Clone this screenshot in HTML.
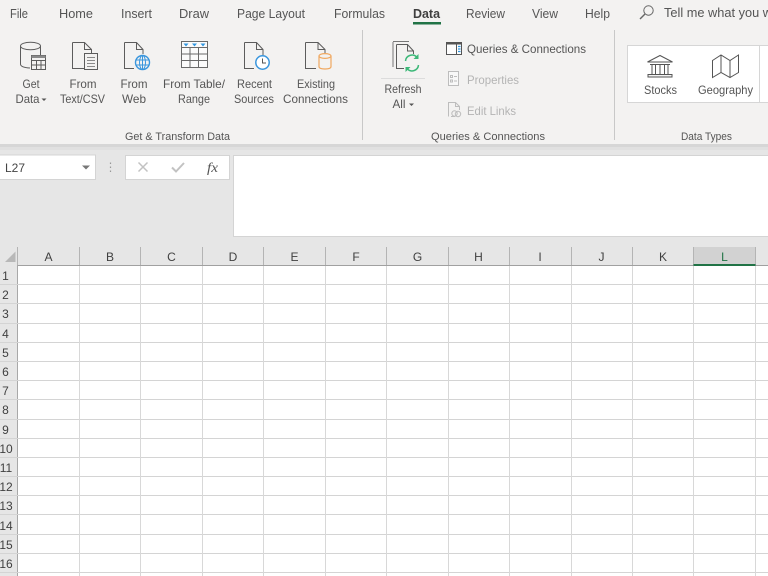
<!DOCTYPE html>
<html lang="en"><head><meta charset="utf-8"><title>Excel Data tab</title>
<style>
html,body{margin:0;padding:0;background:#fff;width:768px;height:576px;overflow:hidden}
svg{display:block;filter:blur(.3px)}
text{font-family:"Liberation Sans",sans-serif;fill:#555;font-size:12px}
.t{font-size:12.5px;fill:#555}
.c{text-anchor:middle}
.g{font-size:11px;fill:#555}
.d{fill:#b4b4b4}
.h{font-size:12px;fill:#404040;text-anchor:middle}
.n{font-size:12px;fill:#404040;text-anchor:middle}
.i{fill:none;stroke:#5c5c5c;stroke-width:1}
</style></head><body>
<svg width="768" height="576" viewBox="0 0 768 576" xmlns="http://www.w3.org/2000/svg">
<!-- backgrounds -->
<rect width="768" height="576" fill="#fff"/>
<rect width="768" height="247" fill="#e6e6e6"/>
<rect y="144" width="768" height="5" fill="#d6d6d6"/>
<rect y="147" width="768" height="3" fill="#e0e0e0"/>
<rect width="768" height="144" fill="#f3f2f1"/>

<!-- tabs -->
<text class="t" x="10" y="18" textLength="18" lengthAdjust="spacingAndGlyphs">File</text>
<text class="t" x="59" y="18" textLength="34" lengthAdjust="spacingAndGlyphs">Home</text>
<text class="t" x="121" y="18" textLength="31" lengthAdjust="spacingAndGlyphs">Insert</text>
<text class="t" x="179" y="18" textLength="30" lengthAdjust="spacingAndGlyphs">Draw</text>
<text class="t" x="237" y="18" textLength="68" lengthAdjust="spacingAndGlyphs">Page Layout</text>
<text class="t" x="334" y="18" textLength="51" lengthAdjust="spacingAndGlyphs">Formulas</text>
<text class="t" x="413" y="18" textLength="27" lengthAdjust="spacingAndGlyphs" style="font-weight:bold;fill:#3f3f3f">Data</text>
<rect x="413" y="22" width="28" height="2.5" fill="#217346"/>
<text class="t" x="466" y="18" textLength="39" lengthAdjust="spacingAndGlyphs">Review</text>
<text class="t" x="532" y="18" textLength="26" lengthAdjust="spacingAndGlyphs">View</text>
<text class="t" x="585" y="18" textLength="25" lengthAdjust="spacingAndGlyphs">Help</text>
<circle cx="648.5" cy="10.5" r="4.7" fill="none" stroke="#666" stroke-width="1"/>
<path d="M645 14L640 19" stroke="#666" stroke-width="1.4" fill="none"/>
<text class="t" x="664" y="17" textLength="108" lengthAdjust="spacingAndGlyphs">Tell me what you w</text>

<!-- Get Data -->
<path class="i" d="M20.5 46V64Q20.5 67.5 30 68M40.5 46V55"/>
<ellipse class="i" cx="30.5" cy="46" rx="10" ry="3.8"/>
<rect x="31" y="55" width="15" height="15" fill="#f3f2f1"/>
<path class="i" d="M31.5 55.5H45.5V69.5H31.5ZM31.5 60.5H45.5M31.5 65H45.5M36.5 60.5V69.5M41 60.5V69.5"/>
<rect x="31.5" y="55.5" width="14" height="2.5" fill="#8a8a8a"/>
<text class="c" x="31" y="88" textLength="17" lengthAdjust="spacingAndGlyphs">Get</text>
<text x="15.5" y="103" textLength="24" lengthAdjust="spacingAndGlyphs">Data</text>
<path d="M41.5 98.5H46.5L44 101Z" fill="#555"/>

<!-- From Text -->
<path class="i" d="M72.5 42.5H84.5L91.5 49.5V53M84.5 42.5V49.5H91.5M84 68.5H72.5V42.5"/>
<rect x="84.5" y="53.5" width="13" height="16" fill="#f3f2f1" stroke="#5c5c5c"/>
<path d="M87 57.5H95M87 60.5H95M87 63.5H95M87 66.5H95" stroke="#8a8a8a" fill="none"/>
<text class="c" x="83" y="88" textLength="27" lengthAdjust="spacingAndGlyphs">From</text>
<text class="c" x="82.5" y="103" textLength="45" lengthAdjust="spacingAndGlyphs">Text/CSV</text>

<!-- From Web -->
<path class="i" d="M124.5 42.5H136.5L143 49.5V54M136.5 42.5V49.5H143M134 68.5H124.5V42.5"/>
<circle cx="142.5" cy="62.5" r="7" fill="#f3f2f1" stroke="#3a96dd" stroke-width="1.4"/>
<ellipse cx="142.5" cy="62.5" rx="3" ry="7" fill="none" stroke="#3a96dd"/>
<path d="M135.5 60H149.5M135.5 65H149.5M142.5 55.5V69.5" stroke="#3a96dd" fill="none"/>
<text class="c" x="134" y="88" textLength="27" lengthAdjust="spacingAndGlyphs">From</text>
<text class="c" x="134" y="103" textLength="24" lengthAdjust="spacingAndGlyphs">Web</text>

<!-- From Table -->
<rect x="181.5" y="41.5" width="26" height="26" fill="#fbfbfb" stroke="#6a6a6a"/>
<path d="M181.5 47.5H207.5M181.5 54H207.5M181.5 60.5H207.5M190 47.5V67.5M198.5 47.5V67.5" stroke="#6a6a6a" fill="none"/>
<path d="M183.5 43.5H188.5L186 46.5ZM192 43.5H197L194.5 46.5ZM200.5 43.5H205.5L203 46.5Z" fill="#2f96e0"/>
<text x="163" y="88" textLength="62" lengthAdjust="spacingAndGlyphs">From Table/</text>
<text class="c" x="194" y="103" textLength="32" lengthAdjust="spacingAndGlyphs">Range</text>

<!-- Recent -->
<path class="i" d="M244.5 42.5H256.5L263 49.5V55M256.5 42.5V49.5H263M254 68.5H244.5V42.5"/>
<circle cx="262.5" cy="62.5" r="6.7" fill="#fff" stroke="#3a96dd" stroke-width="1.5"/>
<path d="M262.5 58.5V63H266" stroke="#555" fill="none"/>
<text class="c" x="254.5" y="88" textLength="35" lengthAdjust="spacingAndGlyphs">Recent</text>
<text class="c" x="254" y="103" textLength="40" lengthAdjust="spacingAndGlyphs">Sources</text>

<!-- Existing -->
<path class="i" d="M305.5 42.5H318L325 49.5V53M318 42.5V49.5H325M316 68.5H305.5V42.5"/>
<path d="M319 56V66.5Q319 69 325 69Q331 69 331 66.5V56" fill="#f3f2f1" stroke="#f0a860" stroke-width="1.2"/>
<ellipse cx="325" cy="56" rx="6" ry="2.4" fill="#f3f2f1" stroke="#f0a860" stroke-width="1.2"/>
<text class="c" x="316" y="88" textLength="38" lengthAdjust="spacingAndGlyphs">Existing</text>
<text x="283" y="103" textLength="65" lengthAdjust="spacingAndGlyphs">Connections</text>

<text class="g" x="125" y="140" textLength="105" lengthAdjust="spacingAndGlyphs">Get &amp; Transform Data</text>
<path d="M362.5 30V140M614.5 30V140" stroke="#c8c8c8" fill="none"/>

<!-- Refresh -->
<path class="i" d="M393 42V67M393 41.5H409" style="stroke:#777"/>
<path class="i" d="M396.5 44.5H407.5L413.5 51V54M407.5 44.5V51H413.5M404 68.5H396.5V44.5"/>
<path d="M405.5 61A6.5 6.5 0 0 1 417 57.5M418.5 65A6.5 6.5 0 0 1 407 68.5" fill="none" stroke="#3cb878" stroke-width="1.5"/>
<path d="M418.5 54V59H413.5ZM405.5 72V67H410.5Z" fill="#3cb878"/>
<path d="M381 78.5H425" stroke="#dcdcdc" fill="none"/>
<text class="c" x="403" y="93" textLength="37" lengthAdjust="spacingAndGlyphs">Refresh</text>
<text x="392.5" y="108" textLength="13" lengthAdjust="spacingAndGlyphs">All</text>
<path d="M409 103.5H414L411.5 106Z" fill="#555"/>

<!-- Queries icon -->
<rect x="446.5" y="42.5" width="15" height="12" fill="#fdfdfd" stroke="#555"/>
<rect x="446.5" y="42.5" width="15" height="2" fill="#555"/>
<path d="M456.5 44V54" stroke="#555" fill="none"/>
<path d="M458 46.5H460.5M458 49H460.5M458 51.5H460.5" stroke="#2f96e0" stroke-width="1.2" fill="none"/>
<text x="467" y="53" textLength="119" lengthAdjust="spacingAndGlyphs">Queries &amp; Connections</text>

<!-- Properties -->
<rect x="448.5" y="71.5" width="10" height="14" fill="#f8f8f8" stroke="#bdbdbd"/>
<path d="M450.5 75.5H452.5V77.5H450.5ZM450.5 80H452.5V82H450.5ZM454 76.5H457M454 81H457" stroke="#bdbdbd" fill="none"/>
<text class="d" x="467" y="84" textLength="52" lengthAdjust="spacingAndGlyphs">Properties</text>

<!-- Edit Links -->
<path d="M448.5 116.5V102.5H455.5L459.5 106.5V110M455.5 102.5V106.5H459.5" stroke="#bdbdbd" fill="none"/>
<path d="M451 116.500H455" stroke="#bdbdbd" fill="none"/>
<circle cx="454.5" cy="113.5" r="2.7" fill="none" stroke="#bdbdbd"/>
<circle cx="458" cy="114" r="2.7" fill="none" stroke="#bdbdbd"/>
<text class="d" x="467" y="115" textLength="49" lengthAdjust="spacingAndGlyphs">Edit Links</text>

<text class="g" x="431" y="140" textLength="114" lengthAdjust="spacingAndGlyphs">Queries &amp; Connections</text>

<!-- Data types -->
<rect x="627.5" y="45.5" width="145" height="57" fill="#fff" stroke="#d6d6d6"/>
<path d="M759.5 45V102" stroke="#d6d6d6" fill="none"/>
<path class="i" d="M647.5 62L660 55.5L672.5 62ZM650 64.5H670M652 65V74M655.5 65V74M660 65V74M664.5 65V74M668 65V74" style="stroke:#555"/>
<rect x="648" y="74.5" width="24" height="2.5" fill="#f3f3f3" stroke="#555"/>
<path class="i" d="M712.5 60.5L721 55L730 60.5L738.5 55V72.5L730 77.5L721 72.5L712.5 77.5ZM721 55V72.5M730 60.5V77.5" style="stroke:#555"/>
<text class="c" x="660.5" y="94" textLength="33" lengthAdjust="spacingAndGlyphs">Stocks</text>
<text x="698" y="94" textLength="55" lengthAdjust="spacingAndGlyphs">Geography</text>
<text class="g" x="681" y="140" textLength="51" lengthAdjust="spacingAndGlyphs">Data Types</text>

<!-- Name box / formula bar -->
<rect x="-1" y="155" width="96.5" height="24.5" fill="#fff" stroke="#d4d4d4"/>
<text x="5" y="172" style="fill:#444" textLength="20" lengthAdjust="spacingAndGlyphs">L27</text>
<path d="M82 165.5H90L86 169.5Z" fill="#777"/>
<path d="M110.5 162.5V164M110.5 166.5V168M110.5 170.5V172" stroke="#999" stroke-width="1.2" fill="none"/>
<rect x="125.5" y="155.5" width="104" height="24" fill="#fff" stroke="#d4d4d4"/>
<path d="M138.5 162.5L147.5 171.5M147.5 162.5L138.5 171.5" stroke="#c2c2c2" stroke-width="1.5" fill="none"/>
<path d="M172 167.5L176 171.5L184 163" stroke="#c2c2c2" stroke-width="2" fill="none"/>
<text x="207" y="172" style="font-family:'Liberation Serif',serif;font-style:italic;font-size:14px;fill:#555" textLength="11" lengthAdjust="spacingAndGlyphs">fx</text>
<rect x="233.5" y="155.5" width="540" height="81" fill="#fff" stroke="#d4d4d4"/>

<!-- grid headers -->
<rect y="247" width="768" height="18" fill="#e6e6e6"/>
<rect x="693.5" y="247" width="61.5" height="18" fill="#d2d2d2"/>
<path d="M5 262H15.5V251.5Z" fill="#b8b8b8"/>
<path d="M17.5 247V576M79.5 247V265M140.5 247V265M202.5 247V265M263.5 247V265M325.5 247V265M386.5 247V265M448.5 247V265M509.500 247V265M571.5 247V265M632.5 247V265M693.5 247V265M755.5 247V265" stroke="#b4b4b4" fill="none"/>
<path d="M18 265.5H768" stroke="#a0a0a0" fill="none"/>
<rect x="693.5" y="264" width="62" height="2" fill="#217346"/>

<text class="h" x="48.5" y="261">A</text>
<text class="h" x="110" y="261">B</text>
<text class="h" x="171.5" y="261">C</text>
<text class="h" x="233" y="261">D</text>
<text class="h" x="294.5" y="261">E</text>
<text class="h" x="356" y="261">F</text>
<text class="h" x="417.5" y="261">G</text>
<text class="h" x="478.5" y="261">H</text>
<text class="h" x="540" y="261">I</text>
<text class="h" x="601.5" y="261">J</text>
<text class="h" x="663" y="261">K</text>
<text class="h" x="724.5" y="261" style="fill:#217346">L</text>

<!-- row headers -->
<rect y="265" width="17.5" height="311" fill="#e6e6e6"/>
<path d="M17.5 265V576" stroke="#a8a8a8" fill="none"/>
<text class="n" x="5.5" y="280">1</text>
<text class="n" x="5.5" y="299">2</text>
<text class="n" x="5.5" y="318">3</text>
<text class="n" x="5.5" y="338">4</text>
<text class="n" x="5.5" y="357">5</text>
<text class="n" x="5.5" y="376">6</text>
<text class="n" x="5.5" y="395">7</text>
<text class="n" x="5.5" y="414">8</text>
<text class="n" x="5.5" y="434">9</text>
<text class="n" x="6" y="453">10</text>
<text class="n" x="6" y="472">11</text>
<text class="n" x="6" y="491">12</text>
<text class="n" x="6" y="510">13</text>
<text class="n" x="6" y="530">14</text>
<text class="n" x="6" y="549">15</text>
<text class="n" x="6" y="568">16</text>

<!-- grid lines -->
<path d="M0 284.5H768M0 303.5H768M0 323.5H768M0 342.5H768M0 361.5H768M0 380.5H768M0 399.5H768M0 419.5H768M0 438.5H768M0 457.5H768M0 476.5H768M0 495.5H768M0 514.5H768M0 534.5H768M0 553.5H768M0 572.5H768" stroke="#d4d4d4" fill="none"/>
<path d="M79.5 266V576M140.5 266V576M202.5 266V576M263.5 266V576M325.5 266V576M386.5 266V576M448.5 266V576M509.5 266V576M571.5 266V576M632.5 266V576M693.5 266V576M755.5 266V576" stroke="#d8d8d8" fill="none"/>
</svg>
</body></html>
